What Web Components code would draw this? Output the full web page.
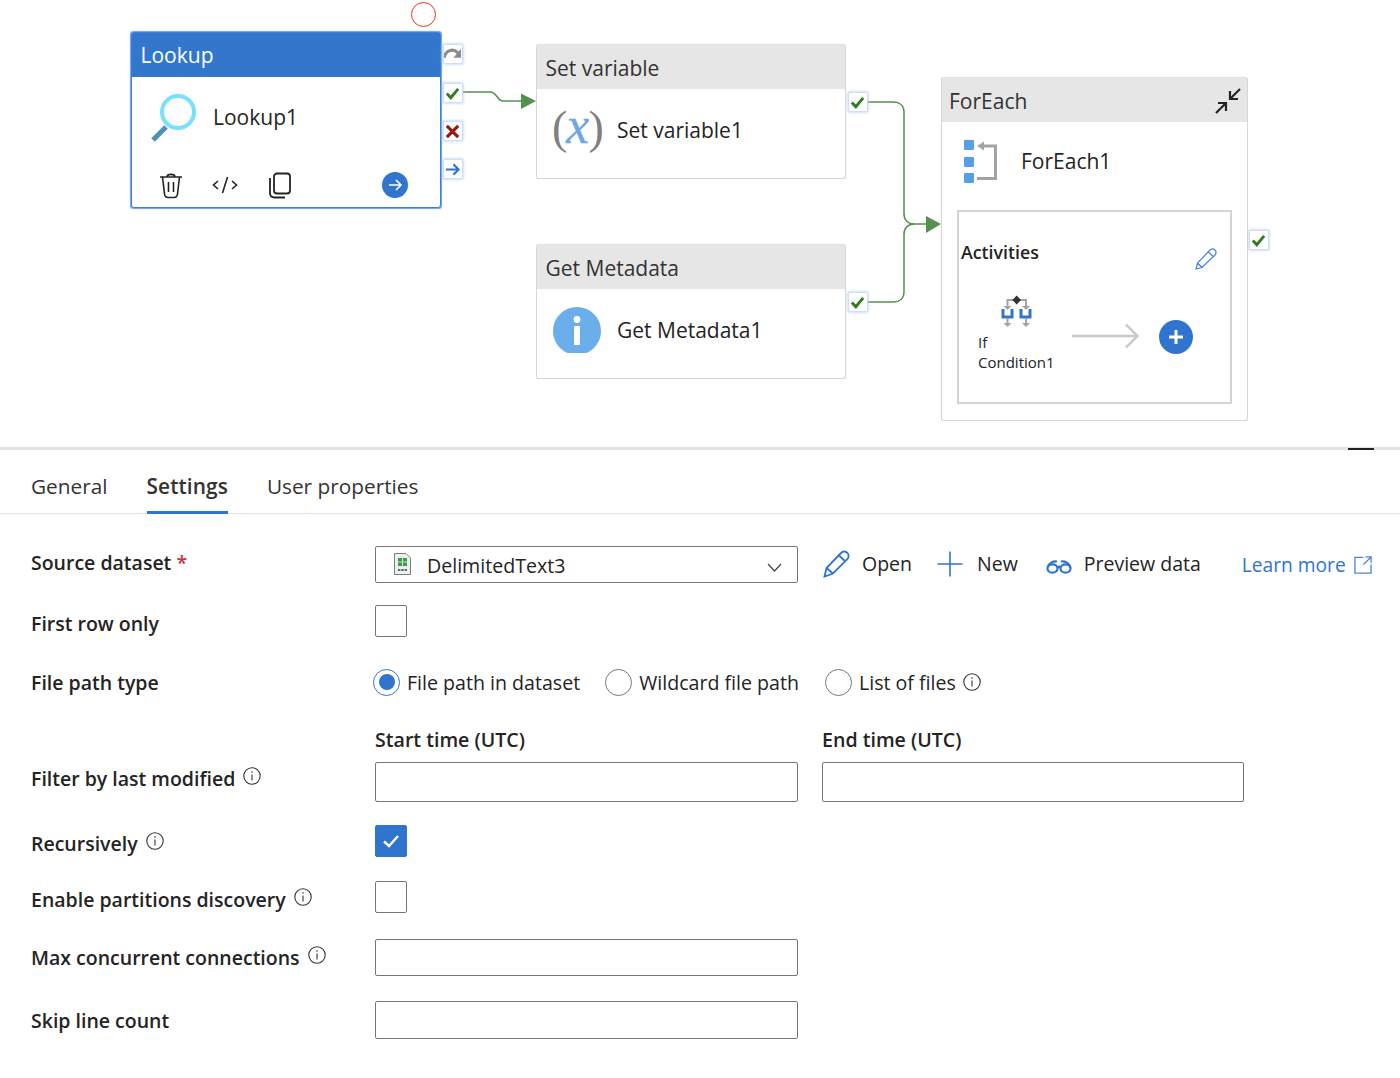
<!DOCTYPE html>
<html lang="en">
<head>
<meta charset="utf-8">
<title>Pipeline settings</title>
<style>
	html, body {
		margin: 0;
		background: #fff;
		color: #242424;
		font-family: "Open Sans", "Noto Sans", sans-serif;
		overflow: hidden;
	}
</style>
</head>
<body>
<pipeline-canvas>
	<pipeline-node style="left:131px;top:32px;width:310px;height:176px" selected>
		<span slot="title">Lookup</span>
		<svg slot="icon" width="48" height="48" viewBox="0 0 48 48">
			<path d="M15 33 L2 46" stroke="#4a90b8" stroke-width="5" fill="none"/>
			<circle cx="27" cy="18" r="16" stroke="#78e0ff" stroke-width="4" fill="none"/>
		</svg>
		<span slot="name">Lookup1</span>
		<svg slot="tools" style="position:absolute;left:26px;bottom:8px" width="26" height="28" viewBox="0 0 26 28" fill="none" stroke="#242424" stroke-width="1.6">
			<path d="M2 6 H24 M9 6 C9 2.5 17 2.5 17 6 M4.5 6 L6.5 23 C6.8 25.5 8 26.5 10 26.5 H16 C18 26.5 19.2 25.5 19.5 23 L21.5 6 M10.5 11 V21 M15.5 11 V21"/>
		</svg>
		<svg slot="tools" style="position:absolute;left:80px;bottom:12px" width="26" height="20" viewBox="0 0 26 20" fill="none" stroke="#242424" stroke-width="1.6">
			<path d="M6 6 L1.5 10 L6 14 M20 6 L24.5 10 L20 14 M15.5 2 L10.5 18"/>
		</svg>
		<svg slot="tools" style="position:absolute;left:136px;bottom:8px" width="24" height="27" viewBox="0 0 24 27" fill="none" stroke="#242424" stroke-width="1.8">
			<rect x="6" y="1.5" width="16" height="20" rx="3"/>
			<path d="M2 6 V21 C2 24 4 25.5 6.5 25.5 H17"/>
		</svg>
		<svg slot="tools" style="position:absolute;left:250px;bottom:9px" width="26" height="26" viewBox="0 0 26 26">
			<circle cx="13" cy="13" r="13" fill="#2f74cf"/>
			<path d="M7 13 H19 M14 8 L19 13 L14 18" fill="none" stroke="#fff" stroke-width="1.6"/>
		</svg>
	</pipeline-node>

	<pipeline-node style="left:536px;top:44px;width:310px;height:135px">
		<span slot="title">Set variable</span>
		<var-icon slot="icon"></var-icon>
		<span slot="name">Set variable1</span>
	</pipeline-node>

	<pipeline-node style="left:536px;top:244px;width:310px;height:135px">
		<span slot="title">Get Metadata</span>
		<svg slot="icon" style="margin-left:1px" width="48" height="46" viewBox="0 0 48 46">
			<circle cx="24" cy="24" r="24" fill="#6aaeeb"/>
			<circle cx="24" cy="12.5" r="3.4" fill="#fff"/>
			<rect x="21" y="19" width="6" height="19" rx="1" fill="#fff"/>
		</svg>
		<span slot="name">Get Metadata1</span>
	</pipeline-node>

	<pipeline-node style="left:941px;top:77px;width:307px;height:344px" container>
		<span slot="title">ForEach</span>
		<svg slot="corner" width="28" height="28" viewBox="0 0 28 28" fill="none" stroke="#242424" stroke-width="2.2">
			<path d="M26 2 L16 12 M16 4 V12 H24 M2 26 L12 16 M4 16 H12 V24"/>
		</svg>
		<svg slot="icon" width="34" height="44" viewBox="0 0 34 44">
			<rect x="0" y="1" width="10" height="10" rx="1" fill="#559fe3"/>
			<rect x="0" y="18" width="10" height="10" rx="1" fill="#559fe3"/>
			<rect x="0" y="34" width="10" height="10" rx="1" fill="#559fe3"/>
			<path d="M19 7 H31.5 V39.5 H13" fill="none" stroke="#a3a3a3" stroke-width="3"/>
			<path d="M13 7 L20 2.5 V11.5 Z" fill="#a3a3a3"/>
		</svg>
		<span slot="name">ForEach1</span>
		<activities-box slot="body"></activities-box>
	</pipeline-node>

	<pipeline-port kind="skip" style="left:443px;top:44px"></pipeline-port>
	<pipeline-port kind="ok" style="left:443px;top:83px"></pipeline-port>
	<pipeline-port kind="fail" style="left:443px;top:121px"></pipeline-port>
	<pipeline-port kind="next" style="left:443px;top:159px"></pipeline-port>
	<pipeline-port kind="ok" style="left:848px;top:92px"></pipeline-port>
	<pipeline-port kind="ok" style="left:848px;top:292px"></pipeline-port>
	<pipeline-port kind="ok" style="left:1249px;top:230px"></pipeline-port>
</pipeline-canvas>

<panel-splitter></panel-splitter>

<tab-bar>
	<tab-item>General</tab-item>
	<tab-item active>Settings</tab-item>
	<tab-item>User properties</tab-item>
</tab-bar>

<form-row style="margin-top:32px;--row-height:37px;--label-bottom:3px">
	<span slot="label">Source dataset <b style="color:#c4314b;font-weight:600">*</b></span>
	<select-box>DelimitedText3</select-box>
	<action-link style="margin-left:25px;--gap:12px">
		<svg slot="icon" width="27" height="28" viewBox="0 0 27 28" fill="none" stroke="#2f74cf" stroke-width="1.8">
			<path d="M1.5 26.5 L3.5 18 L18 3 C20 1 22.5 1 24.5 3 C26 5 26 7 24.5 9 L10 23.5 Z M3.5 18 L10 23.5 M16 5.5 L22.5 11.5"/>
		</svg>
		Open
	</action-link>
	<action-link style="margin-left:25px;--gap:14px">
		<svg slot="icon" width="26" height="26" viewBox="0 0 26 26" stroke="#2f74cf" stroke-width="1.6">
			<path d="M0.5 13 H25.5 M13 0.5 V25.5"/>
		</svg>
		New
	</action-link>
	<action-link style="margin-left:28px;--gap:12px">
		<svg slot="icon" style="margin-top:5px" width="26" height="16" viewBox="0 0 26 16" fill="none" stroke="#2f74cf" stroke-width="2.2">
			<ellipse cx="6.5" cy="10.5" rx="5" ry="4.2"/>
			<ellipse cx="19.5" cy="10.5" rx="5" ry="4.2"/>
			<path d="M11.5 9.5 C12.5 8.5 13.5 8.5 14.5 9.5 M1.5 9.5 C2.5 5 7 3 11 3.5 M24.5 9.5 C23.5 5 19 3 15 3.5"/>
		</svg>
		Preview data
	</action-link>
	<action-link link style="margin-left:41px;--gap:8px;font-size:19.2px">
		Learn more
		<svg slot="after" width="18" height="18" viewBox="0 0 19 19" fill="none" stroke="#4a87d6" stroke-width="1.4">
			<path d="M10 1.5 H1 V18 H18 V9 M12 1 H18 V7 M18 1 L10 9"/>
		</svg>
	</action-link>
</form-row>

<form-row style="margin-top:22px;--row-height:32px;--label-top:6px">
	<span slot="label">First row only</span>
	<check-box></check-box>
</form-row>

<form-row style="margin-top:30px;--row-height:30px;--label-top:2px">
	<span slot="label">File path type</span>
	<radio-option checked style="margin-left:-2px">File path in dataset</radio-option>
	<radio-option style="margin-left:25px">Wildcard file path</radio-option>
	<radio-option style="margin-left:26px">List of files</radio-option>
	<info-mark style="margin-left:7px"></info-mark>
</form-row>

<form-row style="margin-top:32px;--row-height:73px;--label-bottom:0;--label-align:end;--label-pad:9px">
	<span slot="label">Filter by last modified <info-mark></info-mark></span>
	<time-field style="margin-right:24px">Start time (UTC)</time-field>
	<time-field style="--field-width:422px">End time (UTC)</time-field>
</form-row>

<form-row style="margin-top:23px;--row-height:32px;--label-top:6px">
	<span slot="label">Recursively <info-mark></info-mark></span>
	<check-box checked></check-box>
</form-row>

<form-row style="margin-top:24px;--row-height:32px;--label-top:6px">
	<span slot="label">Enable partitions discovery <info-mark></info-mark></span>
	<check-box></check-box>
</form-row>

<form-row style="margin-top:26px;--row-height:37px;--label-top:1px">
	<span slot="label">Max concurrent connections <info-mark></info-mark></span>
	<text-box></text-box>
</form-row>

<form-row style="margin-top:25px;--row-height:38px;--label-top:2px">
	<span slot="label">Skip line count</span>
	<text-box></text-box>
</form-row>

<script>
(() => {
	const BLUE = '#2f74cf';
	const GREEN = '#56904f';

	/* shadow root + styles, shared by every element below */
	const component = (tag, css, html) => {
		customElements.define(tag, class extends HTMLElement {
			constructor() {
				super();
				const shadow = this.attachShadow({mode: 'open'});
				shadow.innerHTML = `<style>${css}</style>${typeof html === 'function' ? html(this) : html}`;
			}
		});
	};

	/* free canvas: nodes and wires keep their place by coordinates */
	component('pipeline-canvas', `
		:host { display: block; position: relative; height: 447px; overflow: hidden; }
		svg { position: absolute; left: 0; top: 0; }
		.mark { position: absolute; left: 411px; top: 1.5px; width: 25px; height: 25px; border: 1.5px solid #e8352b; border-radius: 50%; box-sizing: border-box; }
	`, `
		<svg width="1400" height="447" fill="none" stroke="${GREEN}" stroke-width="1.5">
			<path d="M463 92 H490 C497 92 497 101 503 101 H524"/>
			<path d="M867 102 H893 C900 102 904 106 904 112 V214 C904 220 908 224 914 224 H928"/>
			<path d="M867 302 H893 C900 302 904 298 904 292 V234 C904 228 908 224 914 224"/>
			<path d="M521 93.5 L536 101 L521 109 Z M926 216 L941 224 L926 233 Z" fill="${GREEN}" stroke="none"/>
		</svg>
		<span class="mark"></span>
		<slot></slot>
	`);

	component('pipeline-node', `
		:host { display: flex; flex-direction: column; position: absolute; box-sizing: border-box; background: #fff; border: 1px solid #d6d6d6; border-top-color: #e2e2e2; border-radius: 3px; font-size: 21px; box-shadow: 0 0 1px rgba(0,0,0,.1); }
		:host([selected]) { border: 1px solid #3a80d8; box-shadow: 0 0 1px .5px rgba(58,128,216,.75); }
		header { display: flex; align-items: center; justify-content: space-between; height: 44px; flex: none; padding: 2px 5px 0 8.5px; box-sizing: border-box; background: #e6e6e6; color: #333; }
		:host([selected]) header { background: #3277cc; color: #fff; padding-top: 0; }
		:host([container]) header { padding-left: 7px; padding-top: 0; }
		:host([container]) header ::slotted(span) { padding-top: 2px; }
		.main { display: flex; align-items: center; height: 81px; padding-left: 15px; flex: none; font-size: 21px; }
		:host([selected]) .main { height: 82px; padding-left: 19px; }
		:host([container]) .main { height: 78px; padding-left: 22px; }
		.icon { display: flex; width: 65px; flex: none; }
		:host([selected]) .icon { width: 62px; }
		:host([container]) .icon { width: 57px; }
		.icon ::slotted(*) { display: block; }
		:host([selected]) .name { padding-bottom: 2px; }
		.corner ::slotted(svg) { display: block; margin-top: 1px; }
	`, `
		<header><slot name="title"></slot><span class="corner"><slot name="corner"></slot></span></header>
		<div class="main"><span class="icon"><slot name="icon"></slot></span><span class="name"><slot name="name"></slot></span></div>
		<slot name="body"></slot>
		<slot name="tools"></slot>
	`);

	/* (x) of the Set variable activity */
	component('var-icon', `
		:host { display: block; width: 50px; height: 46px; font-family: "Liberation Serif", serif; line-height: 38px; white-space: nowrap; }
		i { color: #6fa6ea; font-size: 52px; font-weight: 400; -webkit-text-stroke: .3px #6fa6ea; margin: 0 -1px; }
		span { color: #808080; font-size: 46px; }
	`, `<span>(</span><i>x</i><span>)</span>`);

	const PORT_ICONS = {
		skip: `<path d="M0 12 C2 3 10 2 15 7" fill="none" stroke="#8c8c8c" stroke-width="3.4"/><path d="M18 2.5 V12 H10 Z" fill="#8c8c8c"/>`,
		ok: `<path d="M3 8.5 L7.2 13 L15 3.5" fill="none" stroke="#2f7d1e" stroke-width="3"/>`,
		fail: `<path d="M3 2.5 L15 14.5 M15 2.5 L3 14.5" fill="none" stroke="#951b12" stroke-width="3.4"/>`,
		next: `<path d="M2 8.5 H15 M10 3 L15.5 8.5 L10 14" fill="none" stroke="${BLUE}" stroke-width="2.2"/>`,
	};

	component('pipeline-port', `
		:host { display: flex; align-items: center; justify-content: center; position: absolute; width: 20px; height: 20px; box-sizing: border-box; background: #fff; border: 1px solid #cfe0f6; box-shadow: 0 0 3px #a9c8f2; }
		svg { display: block; margin-right: 1px; }
	`, (host) => `<svg width="18" height="17" viewBox="0 0 18 17">${PORT_ICONS[host.getAttribute('kind')]}</svg>`);

	component('activities-box', `
		:host { display: block; box-sizing: border-box; position: relative; margin: 10px 15px 0; height: 194px; border: 2px solid #d4d4d4; }
		h3 { position: absolute; left: 2px; top: 28px; margin: 0; font-size: 17.8px; line-height: 24px; font-weight: 600; }
		.pencil { position: absolute; left: 236px; top: 36px; }
		.glyph { position: absolute; left: 41px; top: 83px; }
		p { position: absolute; left: 19px; top: 121px; margin: 0; font-size: 15px; line-height: 19.5px; }
		.wire { position: absolute; left: 113px; top: 110px; }
		.plus { position: absolute; left: 200px; top: 108px; }
	`, `
		<h3>Activities</h3>
		<svg class="pencil" width="22" height="22" viewBox="0 0 22 22" fill="none" stroke="#3f86e0" stroke-width="1.2">
			<path d="M1 21 L2.5 15 L15 2 C16.5 .7 18.5 .7 20 2 C21.3 3.5 21.3 5.5 20 7 L7 19.5 Z M2.5 15 L7 19.5 M13.5 4 L18 8.5"/>
		</svg>
		<svg class="glyph" width="34" height="34" viewBox="0 0 34 34">
			<path d="M7.5 14 V5 H26 V14" fill="none" stroke="#a3a3a3" stroke-width="2"/>
			<path d="M3.5 11 H11.5 L7.5 15 Z M22 11 H30 L26 15 Z" fill="#a3a3a3"/>
			<path d="M16.7 0.5 L21 5 L16.7 9.5 L12.4 5 Z" fill="#333"/>
			<path d="M3 14 V22 H12 V14 M21 14 V22 H30 V14" fill="none" stroke="#2f74cf" stroke-width="3"/>
			<path d="M7.5 23 V30 M26 23 V30" stroke="#a3a3a3" stroke-width="2"/>
			<path d="M3.5 28 H11.5 L7.5 32 Z M22 28 H30 L26 32 Z" fill="#a3a3a3"/>
		</svg>
		<p>If<br>Condition1</p>
		<svg class="wire" width="68" height="28" viewBox="0 0 68 28" fill="none" stroke="#c8c8c8" stroke-width="2.4">
			<path d="M0 14 H65 M54 2.5 L65.5 14 L54 25.5"/>
		</svg>
		<svg class="plus" width="34" height="34" viewBox="0 0 34 34">
			<circle cx="17" cy="17" r="17" fill="${BLUE}"/>
			<path d="M17 10 V24 M10 17 H24" stroke="#fff" stroke-width="3"/>
		</svg>
	`);

	component('panel-splitter', `
		:host { display: block; position: relative; height: 3px; background: #e2e2e2; }
		span { position: absolute; right: 26px; top: 1px; width: 26px; height: 2px; background: #222; }
	`, `<span></span>`);

	component('tab-bar', `
		:host { display: flex; gap: 39px; height: 63px; padding-left: 31px; border-bottom: 1px solid #e1e1e1; }
	`, `<slot></slot>`);

	component('tab-item', `
		:host { display: flex; align-items: center; box-sizing: border-box; height: 64px; padding-top: 10px; border-bottom: 3px solid transparent; font-size: 20.8px; color: #333; }
		:host([active]) { border-bottom-color: ${BLUE}; font-weight: 600; letter-spacing: .1px; }
	`, `<slot></slot>`);

	component('form-row', `
		:host { display: flex; align-items: center; height: var(--row-height); }
		.label { display: block; flex: none; box-sizing: border-box; width: 375px; padding: var(--label-top, 0) 0 var(--label-bottom, 0) 31px; font-size: 19.5px; font-weight: 600; line-height: 28px; align-self: var(--label-align, center); margin-bottom: var(--label-pad, 0); }
	`, `<span class="label"><slot name="label"></slot></span><slot></slot>`);

	component('select-box', `
		:host { display: flex; align-items: center; box-sizing: border-box; width: 423px; height: 37px; border: 1px solid #767676; border-radius: 2px; font-size: 19.6px; }
		.doc { margin-left: 18px; margin-right: 16px; flex: none; margin-bottom: 2px; }
		.text { flex: 1; padding-top: 1px; }
		.chev { margin-right: 15px; margin-top: 5px; }
	`, `
		<svg class="doc" width="17" height="22" viewBox="0 0 17 22">
			<path d="M.5 .5 H12 L16.5 5 V21.5 H.5 Z" fill="#eef0ee" stroke="#7c7c7c"/>
			<rect x="4" y="5" width="9" height="8" fill="#3f9a4b"/>
			<path d="M4 9 H13 M8.5 5 V13" stroke="#c8e6c9" stroke-width="1"/>
			<path d="M4 17 H13" stroke="#666" stroke-width="2" stroke-dasharray="2.4 .9"/>
		</svg>
		<span class="text"><slot></slot></span>
		<svg class="chev" width="15" height="9" viewBox="0 0 15 9" fill="none" stroke="#444" stroke-width="1.2"><path d="M1 1 L7.5 8 L14 1"/></svg>
	`);

	component('action-link', `
		:host { display: inline-flex; align-items: center; gap: var(--gap); font-size: 19.5px; margin-top: -2px; white-space: nowrap; }
		:host([link]) { color: ${BLUE}; margin-top: 0; }
		::slotted(svg) { display: block; flex: none; }
	`, `<slot name="icon"></slot><slot></slot><slot name="after"></slot>`);

	component('check-box', `
		:host { display: flex; align-items: center; justify-content: center; box-sizing: border-box; width: 32px; height: 32px; border: 1px solid #767676; border-radius: 2px; }
		:host([checked]) { background: ${BLUE}; border-color: ${BLUE}; }
		svg { display: none; }
		:host([checked]) svg { display: block; }
	`, `<svg width="16" height="14" viewBox="0 0 16 14" fill="none" stroke="#fff" stroke-width="2.4"><path d="M1 7.5 L6 12 L15 2"/></svg>`);

	component('radio-option', `
		:host { display: inline-flex; align-items: center; gap: 7px; font-size: 19.6px; white-space: nowrap; }
		.dot { display: flex; align-items: center; justify-content: center; box-sizing: border-box; width: 27px; height: 27px; border: 1px solid #767676; border-radius: 50%; }
		:host([checked]) .dot { border-color: ${BLUE}; }
		:host([checked]) .dot::after { content: ""; width: 16px; height: 16px; border-radius: 50%; background: ${BLUE}; }
	`, `<span class="dot"></span><slot></slot>`);

	component('info-mark', `
		:host { display: inline-block; width: 18px; height: 18px; margin-left: 3px; vertical-align: 1.5px; }
		svg { display: block; }
	`, `<svg width="18" height="18" viewBox="0 0 18 18" fill="none" stroke="#333" stroke-width="1.1">
		<circle cx="9" cy="9" r="8.2"/><path d="M9 7.5 V13.5"/><circle cx="9" cy="5" r=".8" fill="#333" stroke="none"/>
	</svg>`);

	component('text-box', `
		:host { display: block; box-sizing: border-box; width: 423px; height: var(--row-height); border: 1px solid #767676; border-radius: 2px; }
	`, ``);

	component('time-field', `
		:host { display: flex; flex-direction: column; justify-content: space-between; height: 73px; font-size: 19.6px; font-weight: 600; line-height: 22px; }
		.box { display: block; box-sizing: border-box; width: var(--field-width, 423px); height: 40px; border: 1px solid #767676; border-radius: 2px; }
	`, `<span><slot></slot></span><span class="box"></span>`);
})();
</script>
</body>
</html>
